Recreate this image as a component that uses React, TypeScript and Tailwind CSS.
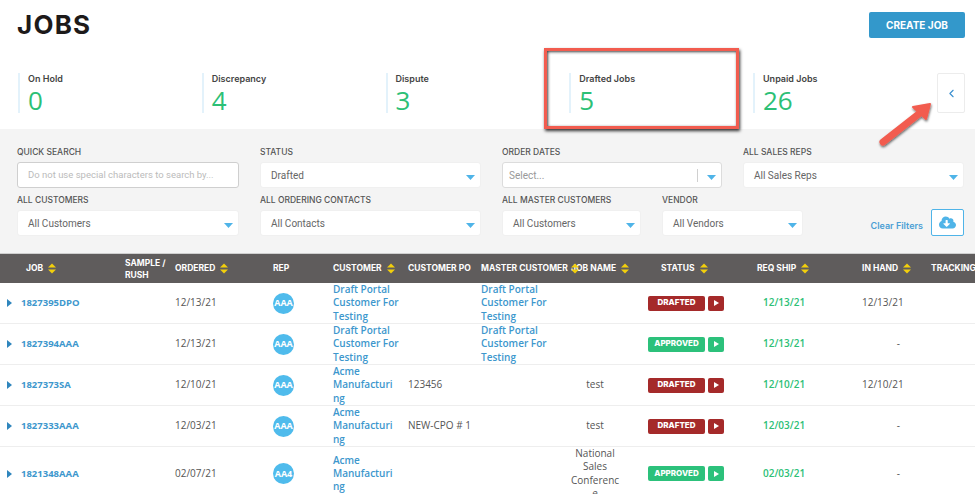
import { ChevronLeft } from 'lucide-react';
import { FaCloudDownloadAlt } from 'react-icons/fa';

const heading = 'font-["Inter",sans-serif]';
const body = 'font-["Open_Sans",sans-serif]';
const rowGrid = 'grid grid-cols-[125px_50px_98px_60px_75px_73px_90px_76px_110px_105px_69px_44px]';

const stats = [
  { label: 'On Hold', value: '0' },
  { label: 'Discrepancy', value: '4' },
  { label: 'Dispute', value: '3' },
  { label: 'Drafted Jobs', value: '5' },
  { label: 'Unpaid Jobs', value: '26' },
];

// line breaks are the ones the narrow columns force in the real table
const rows = [
  { job: '1827395DPO', ordered: '12/13/21', rep: 'AAA', customer: 'Draft Portal\nCustomer For\nTesting', po: '', master: 'Draft Portal\nCustomer For\nTesting', name: '', status: 'DRAFTED', ship: '12/13/21', hand: '12/13/21' },
  { job: '1827394AAA', ordered: '12/13/21', rep: 'AAA', customer: 'Draft Portal\nCustomer For\nTesting', po: '', master: 'Draft Portal\nCustomer For\nTesting', name: '', status: 'APPROVED', ship: '12/13/21', hand: '-' },
  { job: '1827373SA', ordered: '12/10/21', rep: 'AAA', customer: 'Acme\nManufacturi\nng', po: '123456', master: '', name: 'test', status: 'DRAFTED', ship: '12/10/21', hand: '12/10/21' },
  { job: '1827333AAA', ordered: '12/03/21', rep: 'AAA', customer: 'Acme\nManufacturi\nng', po: 'NEW-CPO # 1', master: '', name: 'test', status: 'DRAFTED', ship: '12/03/21', hand: '-' },
  { job: '1821348AAA', ordered: '02/07/21', rep: 'AA4', customer: 'Acme\nManufacturi\nng', po: '', master: '', name: 'National\nSales\nConferenc\ne', status: 'APPROVED', ship: '02/03/21', hand: '-' },
];

function SortIcon() {
  return (
    <svg width="8" height="11" viewBox="0 0 8 11" className="shrink-0">
      <path d="M4 0.5 L8 4.5 H0 Z M0 6.5 H8 L4 10.5 Z" fill="#f2cf0c" />
    </svg>
  );
}

function Caret() {
  return (
    <svg width="9" height="5" viewBox="0 0 9 5" className="absolute right-[5px] top-[12px]">
      <path d="M0 0 H9 L4.5 5 Z" fill="#4fb4e8" />
    </svg>
  );
}

function Label({ children }: { children: string }) {
  return <div className={`${heading} text-[8.5px] leading-[10px] font-medium text-[#555] uppercase mb-[5px]`}>{children}</div>;
}

function Select({ label, value, className = '' }: { label: string; value: string; className?: string }) {
  return (
    <div className={className}>
      <Label>{label}</Label>
      <div className="relative h-[26px] bg-white rounded-[3px] border border-[#f0f0f0] pl-[10px] flex items-center text-[10px] text-[#666] font-['Roboto',sans-serif]">
        {value}
        <Caret />
      </div>
    </div>
  );
}

function Status({ status }: { status: string }) {
  const color = status === 'DRAFTED' ? 'bg-[#a52a2a]' : 'bg-[#2cc17b]';
  return (
    <div className="flex gap-[3px] h-[15px] pl-[1px]">
      <div className={`${color} ${heading} w-[57px] rounded-[2px] text-white text-[8px] font-extrabold flex items-center justify-center`}>{status}</div>
      <div className={`${color} w-[16px] rounded-[2px] flex items-center justify-center`}>
        <svg width="5" height="6" viewBox="0 0 5 6"><path d="M0 0 L5 3 L0 6 Z" fill="#fff" /></svg>
      </div>
    </div>
  );
}

function HeadCell({ children, sort, className = '' }: { children: string; sort?: boolean; className?: string }) {
  return (
    <div className={`flex items-center gap-[5px] whitespace-nowrap ${className}`}>
      <span>{children}</span>
      {sort && <SortIcon />}
    </div>
  );
}

export default function App() {
  return (
    <div className={`relative w-[975px] h-[494px] overflow-hidden bg-white ${body}`}>
      {/* Title */}
      <div className="flex items-start justify-between pl-[17px] pr-[10px] pt-[12px] h-[73px]">
        <h1 className={`${heading} text-[26px] leading-[25px] font-bold text-[#1d1a1a] tracking-[1.2px]`}>JOBS</h1>
        <button className={`${heading} w-[96px] h-[26px] rounded-[2px] bg-[#3398cb] text-white text-[10px] font-bold`}>CREATE JOB</button>
      </div>

      {/* Stats */}
      <div className="flex h-[56px] pl-[18px] pr-[10px]">
        <div className="flex flex-1">
          {stats.map((s) => (
            <div key={s.label} className="w-[183.75px]">
              <div className="h-[40px] border-l-2 border-[#e3f2fb] pl-[8px] pt-[1px]">
                <div className={`${heading} text-[9px] leading-[10px] font-semibold text-[#444]`}>{s.label}</div>
                <div className="mt-[6px] text-[26px] leading-[21px] text-[#2cc076]">{s.value}</div>
              </div>
            </div>
          ))}
        </div>
        <div className="w-[28px] h-[40px] border border-[#ececec] rounded-[2px] flex items-center justify-center">
          <ChevronLeft size={13} strokeWidth={2} className="text-[#3a8fcf]" />
        </div>
      </div>

      {/* Filters */}
      <div className="h-[124px] bg-[#f4f4f4] px-[17px] pt-[18px] pr-[11px]">
        <div className="grid grid-cols-[222px_221px_220px_221px] gap-x-[21px] gap-y-[7px]">
          <div>
            <Label>Quick Search</Label>
            <div className="h-[26px] bg-white rounded-[3px] border border-[#cfcfcf] pl-[10px] flex items-center text-[9.5px] text-[#bbb] font-['Roboto',sans-serif] whitespace-nowrap">
              Do not use special characters to search by...
            </div>
          </div>
          <Select label="Status" value="Drafted" />
          <div>
            <Label>Order Dates</Label>
            <div className="relative h-[26px] bg-white rounded-[3px] border border-[#dcdcdc] pl-[6px] flex items-center text-[10px] text-[#999] font-['Roboto',sans-serif]">
              Select...
              <div className="absolute right-[23px] top-[6px] h-[13px] border-l border-[#d0d0d0]" />
              <Caret />
            </div>
          </div>
          <Select label="All Sales Reps" value="All Sales Reps" />
          <Select label="All Customers" value="All Customers" />
          <Select label="All Ordering Contacts" value="All Contacts" />
          <div className="flex gap-[21px] w-[301px]">
            <Select label="All Master Customers" value="All Customers" className="w-[139px]" />
            <Select label="Vendor" value="All Vendors" className="w-[141px]" />
          </div>
          <div className="flex items-end justify-end gap-[8px]">
            <span className={`${heading} text-[9px] font-semibold text-[#4b9fd5] mb-[4px]`}>Clear Filters</span>
            <div className="w-[33px] h-[27px] bg-white border border-[#4fb4e8] rounded-[2px] flex items-center justify-center">
              <FaCloudDownloadAlt size={17} className="text-[#4fb4e8]" />
            </div>
          </div>
        </div>
      </div>

      {/* Table head */}
      <div className={`${rowGrid} ${heading} h-[30px] bg-[#5f5c5c] text-white text-[8.5px] font-bold items-center border-t border-[#cfcfcf] box-border`}>
        <HeadCell sort className="pl-[26px]">JOB</HeadCell>
        <div className="leading-[12px]">SAMPLE /<br />RUSH</div>
        <HeadCell sort>ORDERED</HeadCell>
        <HeadCell>REP</HeadCell>
        <HeadCell sort>CUSTOMER</HeadCell>
        <HeadCell>CUSTOMER PO</HeadCell>
        <div className="relative">
          MASTER CUSTOMER
          <div className="absolute left-[90px] top-[1px]"><SortIcon /></div>
        </div>
        <HeadCell sort>JOB NAME</HeadCell>
        <HeadCell sort className="pl-[14px]">STATUS</HeadCell>
        <HeadCell sort>REQ SHIP</HeadCell>
        <HeadCell sort>IN HAND</HeadCell>
        <HeadCell>TRACKING</HeadCell>
      </div>

      {/* Rows */}
      {rows.map((r) => (
        <div key={r.job} className={`${rowGrid} items-center min-h-[41px] border-b border-[#eeeeee] text-[10px] leading-[13.33px] text-[#555]`}>
          <div className="flex items-center pl-[7px] gap-[9px] text-[9.5px] font-bold text-[#3d97cd]">
            <svg width="5" height="8" viewBox="0 0 5 8" className="shrink-0"><path d="M0 0 L5 4 L0 8 Z" fill="#2f86bd" /></svg>
            {r.job}
          </div>
          <div />
          <div>{r.ordered}</div>
          <div className="w-[21px] h-[21px] rounded-full bg-[#4fbbec] overflow-hidden flex items-center justify-center text-white text-[9px] font-bold">
            {r.rep}
          </div>
          <div className="font-semibold text-[#3d97cd] whitespace-pre-line">{r.customer}</div>
          <div className="whitespace-nowrap">{r.po}</div>
          <div className="font-semibold text-[#3d97cd] whitespace-pre-line">{r.master}</div>
          <div className="w-[48px] text-center whitespace-pre-line">{r.name}</div>
          <Status status={r.status} />
          <div className="pl-[6px] font-semibold text-[#2cc076]">{r.ship}</div>
          <div className="pr-[31px] text-right">{r.hand}</div>
          <div />
        </div>
      ))}

      {/* Callouts */}
      <div className="absolute left-[544px] top-[48px] w-[195px] h-[81px] border-[3px] border-[#f25c4f] shadow-[1px_2px_3px_rgba(0,0,0,0.8),inset_1px_1px_3px_rgba(0,0,0,0.75)]" />
      <svg width="70" height="56" viewBox="0 0 70 56" className="absolute left-[872px] top-[98px]">
        <defs>
          <filter id="arrow-shadow" x="-20%" y="-20%" width="140%" height="140%">
            <feDropShadow dx="0.5" dy="1.5" stdDeviation="1" floodColor="#000" floodOpacity="0.6" />
          </filter>
        </defs>
        <g filter="url(#arrow-shadow)">
          <path d="M11 44 L48 15" stroke="#f25c4f" strokeWidth="7" strokeLinecap="round" />
          <path d="M41 9 L58 6 L54 21 Z" fill="#f25c4f" stroke="#f25c4f" strokeWidth="2" strokeLinejoin="round" />
        </g>
      </svg>
    </div>
  );
}
